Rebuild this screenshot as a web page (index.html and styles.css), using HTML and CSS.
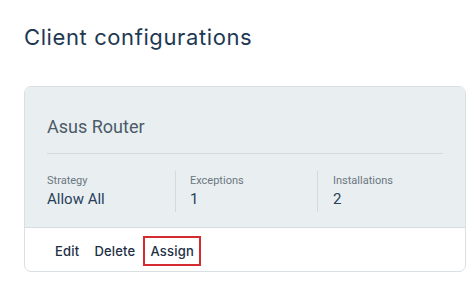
FILE: index.html
```html
<!DOCTYPE html>
<html>
<head>
<meta charset="utf-8">
<link rel="stylesheet" href="styles.css">
</head>
<body>
<div class="page">
  <h1 class="title">Client configurations</h1>
  <div class="card">
    <div class="card-top">
      <div class="card-name">Asus Router</div>
      <div class="stats">
        <div class="stat stat-1">
          <div class="stat-label">Strategy</div>
          <div class="stat-value">Allow All</div>
        </div>
        <div class="stat stat-2">
          <div class="stat-label">Exceptions</div>
          <div class="stat-value">1</div>
        </div>
        <div class="stat stat-3">
          <div class="stat-label">Installations</div>
          <div class="stat-value">2</div>
        </div>
      </div>
    </div>
    <div class="card-actions">
      <button class="action">Edit</button>
      <button class="action">Delete</button>
      <button class="action action-highlight">Assign</button>
    </div>
  </div>
</div>
</body>
</html>
```
FILE: styles.css
```css
* { box-sizing: border-box; }
html, body { margin: 0; padding: 0; background: #ffffff; }
.page {
  padding: 23px 8px 0 24px;
  font-family: "Inter", "Noto Sans", sans-serif;
}
.title {
  margin: 0;
  font-family: "Inter", sans-serif;
  font-weight: 400;
  font-size: 22px;
  line-height: 28px;
  color: #1e3853;
  letter-spacing: 0.6px;
}
.card {
  margin-top: 35px;
  width: 442px;
  border: 1px solid #d9dfe3;
  border-radius: 7px;
  overflow: hidden;
  background: #ffffff;
}
.card-top {
  background: #e9eef1;
  padding: 29px 22px 15px 22px;
  border-bottom: 1px solid #d6dde2;
}
.card-name {
  font-family: "Roboto", sans-serif;
  font-size: 18px;
  line-height: 22px;
  color: #4b5b68;
  padding-bottom: 15px;
  border-bottom: 1px solid #d3d9de;
}
.stats {
  display: flex;
  margin-top: 17px;
}
.stat {
  display: flex;
  flex-direction: column;
  padding: 3px 0 3px 0;
}
.stat-1 { width: 128px; }
.stat-2 { width: 142px; border-left: 1px solid #d3d9de; padding-left: 14px; }
.stat-3 { flex: 1; border-left: 1px solid #d3d9de; padding-left: 15px; }
.stat-label {
  font-family: "Roboto", sans-serif;
  font-size: 11px;
  line-height: 14px;
  color: #6a7680;
}
.stat-value {
  font-family: "Roboto", sans-serif;
  font-size: 15px;
  line-height: 20px;
  color: #27405a;
  margin-top: 1px;
}
.card-actions {
  display: flex;
  align-items: center;
  gap: 1px;
  padding: 8px 0 5px 23px;
}
.action {
  background: none;
  border: 2px solid transparent;
  font-family: "Inter", sans-serif;
  font-weight: 500;
  font-size: 13px;
  letter-spacing: 0.2px;
  color: #1d2f45;
  padding: 0 5px;
  height: 30px;
  line-height: 26px;
}
.action-highlight {
  border-color: #d52a30;
}
```
